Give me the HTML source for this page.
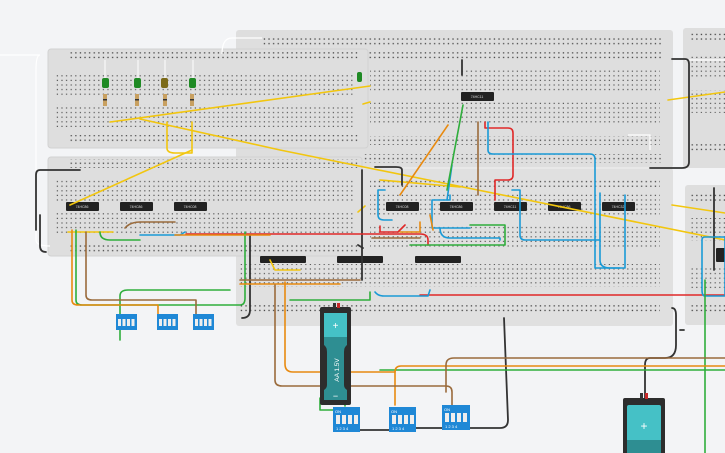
<!DOCTYPE html>
<html><head><meta charset="utf-8"><style>
html,body{margin:0;padding:0;background:#f3f4f6;overflow:hidden}
svg{display:block}
text{font-family:"Liberation Sans",sans-serif}
</style></head><body>
<svg width="725" height="453" viewBox="0 0 725 453" xmlns="http://www.w3.org/2000/svg">
<defs>
<pattern id="d" width="4.6" height="4.6" patternUnits="userSpaceOnUse"><rect x="1.6" y="1.6" width="1.2" height="1.2" fill="#555"/></pattern>
<pattern id="r" width="4.6" height="4.6" patternUnits="userSpaceOnUse"><rect x="1.6" y="1.6" width="1.3" height="1.3" fill="#444"/></pattern>
</defs>
<rect width="725" height="453" fill="#f3f4f6"/>
<rect x="236" y="30" width="437" height="138" rx="3" fill="#dedede"/>
<rect x="236" y="168" width="437" height="158" rx="3" fill="#e0e0e0"/>
<line x1="236" y1="168" x2="673" y2="168" stroke="#e8e8e8" stroke-width="2"/>
<rect x="683" y="28" width="45" height="140" rx="3" fill="#dedede"/>
<rect x="685" y="185" width="45" height="140" rx="3" fill="#dedede"/>
<rect x="262" y="38" width="400" height="9" fill="url(#r)"/>
<rect x="262" y="52" width="400" height="9" fill="url(#r)"/>
<rect x="370" y="69" width="290" height="23" fill="url(#d)"/>
<rect x="370" y="100" width="290" height="23" fill="url(#d)"/>
<rect x="370" y="136" width="290" height="9" fill="url(#r)"/>
<rect x="362" y="154" width="300" height="9" fill="url(#r)"/>
<rect x="370" y="178" width="290" height="9" fill="url(#r)"/>
<rect x="370" y="194" width="290" height="23" fill="url(#d)"/>
<rect x="370" y="226" width="290" height="23" fill="url(#d)"/>
<rect x="240" y="264" width="420" height="23" fill="url(#d)"/>
<rect x="240" y="304" width="420" height="9" fill="url(#r)"/>
<rect x="690" y="32" width="35" height="9" fill="url(#r)"/>
<rect x="690" y="55" width="35" height="23" fill="url(#d)"/>
<rect x="690" y="90" width="35" height="23" fill="url(#d)"/>
<rect x="690" y="143" width="35" height="9" fill="url(#r)"/>
<rect x="690" y="194" width="35" height="9" fill="url(#r)"/>
<rect x="690" y="218" width="35" height="23" fill="url(#d)"/>
<rect x="690" y="266" width="35" height="23" fill="url(#d)"/>
<rect x="690" y="305" width="35" height="9" fill="url(#r)"/>
<rect x="48" y="49" width="320" height="99" rx="3" fill="#dedede" stroke="#d2d2d2"/>
<rect x="70" y="51" width="290" height="9" fill="url(#r)"/>
<rect x="54" y="73" width="300" height="23" fill="url(#d)"/>
<rect x="54" y="104" width="300" height="23" fill="url(#d)"/>
<rect x="70" y="135" width="290" height="9" fill="url(#r)"/>
<rect x="48" y="157" width="314" height="99" rx="3" fill="#dedede" stroke="#d2d2d2"/>
<rect x="70" y="159" width="290" height="9" fill="url(#r)"/>
<rect x="54" y="180" width="300" height="23" fill="url(#d)"/>
<rect x="54" y="212" width="300" height="23" fill="url(#d)"/>
<rect x="70" y="243" width="290" height="9" fill="url(#r)"/>
<g fill="none" stroke="#fff" stroke-width="1.2">
<path d="M0 55 H40 Q36 55 36 70 V240 Q36 246 50 246"/>
<path d="M222 54 Q222 38 232 38 H262"/>
<path d="M628 135 H650 V150"/>
<path d="M685 60 H740"/>
</g>
<g>
<line x1="105" y1="60" x2="105" y2="80" stroke="#fff"/><line x1="138" y1="60" x2="138" y2="80" stroke="#fff"/><line x1="165" y1="60" x2="165" y2="80" stroke="#fff"/><line x1="193" y1="60" x2="193" y2="80" stroke="#fff"/>
<rect x="102" y="78" width="7" height="10" rx="2" fill="#1f8a24"/>
<rect x="134" y="78" width="7" height="10" rx="2" fill="#1f8a24"/>
<rect x="161" y="78" width="7" height="10" rx="2" fill="#7b6a18"/>
<rect x="189" y="78" width="7" height="10" rx="2" fill="#1f8a24"/>
<rect x="357" y="72" width="5" height="10" rx="2" fill="#1f8a24"/>
<g fill="#c8a060"><rect x="103" y="94" width="4" height="12"/><rect x="135" y="94" width="4" height="12"/><rect x="163" y="94" width="4" height="12"/><rect x="190" y="94" width="4" height="12"/></g>
<g fill="#333"><rect x="103" y="99" width="4" height="1.5"/><rect x="135" y="99" width="4" height="1.5"/><rect x="163" y="99" width="4" height="1.5"/><rect x="190" y="99" width="4" height="1.5"/></g>
</g>
<g fill="#222">
<rect x="461" y="92" width="33" height="9" rx="1"/>
<rect x="66" y="202" width="33" height="9" rx="1"/><rect x="120" y="202" width="33" height="9" rx="1"/><rect x="174" y="202" width="33" height="9" rx="1"/>
<rect x="386" y="202" width="33" height="9" rx="1"/><rect x="440" y="202" width="33" height="9" rx="1"/><rect x="494" y="202" width="33" height="9" rx="1"/><rect x="548" y="202" width="33" height="9" rx="1"/><rect x="602" y="202" width="33" height="9" rx="1"/>
<rect x="260" y="256" width="46" height="7" rx="1"/><rect x="337" y="256" width="46" height="7" rx="1"/><rect x="415" y="256" width="46" height="7" rx="1"/>
<rect x="716" y="248" width="12" height="14" rx="1"/>
</g>
<g fill="#ddd" font-size="3.5" text-anchor="middle">
<text x="477" y="98">74HC11</text><text x="82" y="208">74HC86</text><text x="136" y="208">74HC86</text><text x="190" y="208">74HC08</text>
<text x="402" y="208">74HC08</text><text x="456" y="208">74HC86</text><text x="510" y="208">74HC11</text><text x="564" y="208">74HC86</text><text x="618" y="208">74HC32</text>
</g>
<g fill="none" stroke-width="1.6" stroke-linecap="round" stroke-linejoin="round">
<g stroke="#f2c60f">
<path d="M110 122 L370 86"/><path d="M140 119 L280 150 L725 240"/><path d="M167 122 V148 Q167 153 175 153 H192 V122"/><path d="M192 150 L70 205"/>
<path d="M668 100 L725 92"/><path d="M370 102 L363 104"/><path d="M380 180 L460 187"/><path d="M672 205 L725 213"/><path d="M68 232 H113"/><path d="M270 260 L275 270 H300"/><path d="M365 206 L358 212"/>
</g>
<g stroke="#333" stroke-width="1.8">
<path d="M672 59 H685 Q689 59 689 64 V162 Q689 168 682 168 H650"/><path d="M462 60 V75"/><path d="M362 170 V280"/><path d="M358 245 L363 248"/>
<path d="M80 170 H40 Q36 170 36 175 V230"/><path d="M40 215 V246 Q40 252 46 252"/><path d="M375 167 H396 Q402 167 402 170 V185"/>
<path d="M250 236 V310 Q250 318 242 318"/><path d="M504 318 L508 420 Q508 428 500 428 H470"/><path d="M416 428 H444"/><path d="M360 430 H389"/>
<path d="M672 308 Q676 308 676 315 V345 Q676 358 665 358 H650 Q645 358 645 365 V400"/><path d="M684 330 H680"/><path d="M714 188 V270"/>
</g>
<g stroke="#e02828">
<path d="M186 234 H420 Q428 234 428 240 V245"/><path d="M420 295 H725"/><path d="M485 122 V128 H508 Q513 128 513 133 V175 Q513 180 508 180 H495 V200"/><path d="M405 225 L398 232 H380 V226"/>
</g>
<g stroke="#1a9ad6">
<path d="M488 122 V150 Q488 154 493 154 H590 Q595 154 595 159 V268 H620"/><path d="M385 190 H378 V215 Q378 220 384 220 H392"/><path d="M600 193 V260 Q600 268 610 268 H625 V195"/>
<path d="M450 195 V200 H432 V228 H470"/><path d="M512 190 H520 V235 Q520 240 525 240 H600"/><path d="M140 235 H180 L185 232"/><path d="M375 292 Q378 296 384 296 H428 L430 290"/>
<path d="M705 237 H725 V296 H705 Q702 296 702 290 V240 Q702 237 705 237"/><path d="M452 165 L447 200"/><path d="M440 228 Q440 238 450 238 H500 V240"/>
</g>
<g stroke="#2fae3c">
<path d="M463 105 L447 190"/><path d="M76 230 V300 Q76 305 82 305 H240 Q245 305 245 298 V232"/><path d="M100 232 Q100 240 110 240 H140"/>
<path d="M120 340 V296 Q120 290 128 290 H230"/><path d="M290 300 H370 V292"/><path d="M380 370 H725"/><path d="M705 280 V453"/>
<path d="M320 398 V410 H333"/><path d="M345 400 V406"/><path d="M470 225 H505 V245 H410"/>
</g>
<g stroke="#e88a10">
<path d="M72 230 V300 Q72 305 78 305 H158 V320"/><path d="M448 125 L400 195"/><path d="M285 282 V364 Q285 372 293 372 H395 V405"/><path d="M395 372 Q395 366 401 366 H725"/>
<path d="M175 235 H270"/><path d="M240 284 H340"/><path d="M400 232 H420 V222"/><path d="M430 215 L433 230"/>
</g>
<g stroke="#9a6b3c">
<path d="M86 232 V295 Q86 300 92 300 H196 V315"/><path d="M478 122 V195"/><path d="M275 285 V380 Q275 386 282 386 H446 Q452 386 452 392 V406"/>
<path d="M446 392 V365 Q446 358 454 358 H725"/><path d="M240 280 H360"/><path d="M125 228 Q130 222 140 222 H175"/><path d="M372 238 H420"/>
</g>
</g>
<rect x="320" y="307" width="31" height="98" rx="2" fill="#2d2d2d"/>
<rect x="324" y="313" width="23" height="24" fill="#45c1c6"/>
<path d="M324 337 H347 V345 Q344 347 344 352 V385 Q344 388 347 390 V400 H324 V390 Q327 388 327 385 V352 Q327 347 324 345 Z" fill="#2e8e92"/>
<text x="335.5" y="329" fill="#fff" font-size="10" text-anchor="middle">+</text>
<text x="335.5" y="399" fill="#fff" font-size="9" text-anchor="middle">−</text>
<text transform="translate(339 370) rotate(-90)" fill="#fff" font-size="6.5" text-anchor="middle">AA 1.5V</text>
<rect x="333" y="303" width="3" height="5" fill="#333"/><rect x="337" y="303" width="3" height="5" fill="#c62828"/>
<rect x="623" y="398" width="42" height="60" rx="2" fill="#2d2d2d"/>
<rect x="627" y="405" width="34" height="40" rx="2" fill="#45c1c6"/>
<rect x="627" y="440" width="34" height="13" fill="#2e8e92"/>
<text x="644" y="430" fill="#fff" font-size="12" text-anchor="middle">+</text>
<rect x="640" y="393" width="3" height="6" fill="#333"/><rect x="645" y="393" width="3" height="6" fill="#c62828"/>
<g font-size="4" fill="#fff">
<g transform="translate(116 314)"><rect width="21" height="16" fill="#1f88d6"/><g fill="#eee"><rect x="2" y="5" width="3" height="7"/><rect x="6.5" y="5" width="3" height="7"/><rect x="11" y="5" width="3" height="7"/><rect x="15.5" y="5" width="3" height="7"/></g></g>
<g transform="translate(157 314)"><rect width="21" height="16" fill="#1f88d6"/><g fill="#eee"><rect x="2" y="5" width="3" height="7"/><rect x="6.5" y="5" width="3" height="7"/><rect x="11" y="5" width="3" height="7"/><rect x="15.5" y="5" width="3" height="7"/></g></g>
<g transform="translate(193 314)"><rect width="21" height="16" fill="#1f88d6"/><g fill="#eee"><rect x="2" y="5" width="3" height="7"/><rect x="6.5" y="5" width="3" height="7"/><rect x="11" y="5" width="3" height="7"/><rect x="15.5" y="5" width="3" height="7"/></g></g>
<g transform="translate(333 407)"><rect width="27" height="25" fill="#1f88d6"/><text x="2" y="6">ON</text><g fill="#eee"><rect x="3" y="8" width="4" height="9"/><rect x="9" y="8" width="4" height="9"/><rect x="15" y="8" width="4" height="9"/><rect x="21" y="8" width="4" height="9"/></g><text x="3" y="23">1 2 3 4</text></g>
<g transform="translate(389 407)"><rect width="27" height="25" fill="#1f88d6"/><text x="2" y="6">ON</text><g fill="#eee"><rect x="3" y="8" width="4" height="9"/><rect x="9" y="8" width="4" height="9"/><rect x="15" y="8" width="4" height="9"/><rect x="21" y="8" width="4" height="9"/></g><text x="3" y="23">1 2 3 4</text></g>
<g transform="translate(442 405)"><rect width="28" height="25" fill="#1f88d6"/><text x="2" y="6">ON</text><g fill="#eee"><rect x="3" y="8" width="4" height="9"/><rect x="9" y="8" width="4" height="9"/><rect x="15" y="8" width="4" height="9"/><rect x="21" y="8" width="4" height="9"/></g><text x="3" y="23">1 2 3 4</text></g>
</g>
</svg>
</body></html>
